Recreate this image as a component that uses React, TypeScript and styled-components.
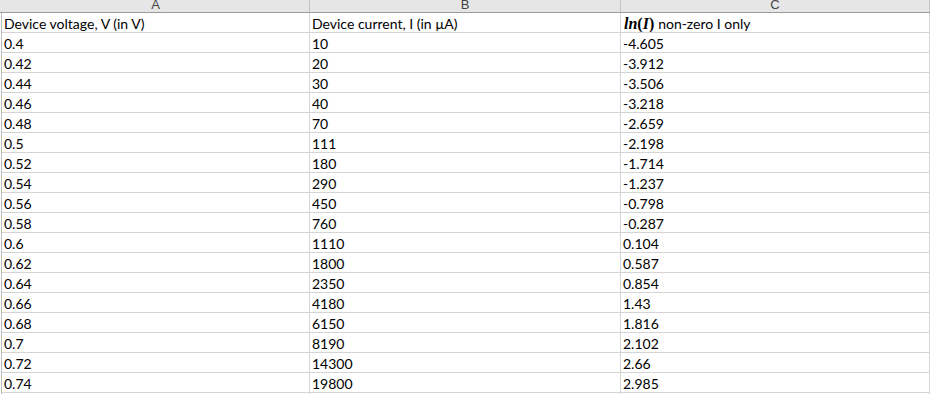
import styled, { createGlobalStyle } from 'styled-components';

const GlobalStyle = createGlobalStyle`
    html, body {
        margin: 0;
        padding: 0;
        background: #ffffff;
        overflow: hidden;
    }
`;

const Sheet = styled.div`
    width: 930px;
    height: 394px;
    overflow: hidden;
    background: #ffffff;
    font-family: Lato, "Liberation Sans", sans-serif;
    color: #000000;
`;

const Row = styled.div`
    display: grid;
    grid-template-columns: 2px 308px 311px 1fr;
`;

const HeaderRow = styled(Row)`
    height: 12px;
    background: #e6e6e6;
    border-bottom: 1px solid #9b9b9b;
`;

const Corner = styled.div`
    background: #e6e6e6;
`;

const ColumnHead = styled.div`
    height: 12px;
    overflow: hidden;
    display: flex;
    align-items: flex-end;
    justify-content: center;
    border-right: 1px solid #c4c4c4;
    font-family: "Liberation Sans", Arial, sans-serif;
    font-size: 13px;
    line-height: 14px;
    color: #444444;
`;

const Gutter = styled.div`
    border-right: 1px solid #bcbcbc;
`;

const Cell = styled.div`
    height: 19px;
    padding-left: 2px;
    display: flex;
    align-items: flex-end;
    border-right: 1px solid #d4d4d4;
    border-bottom: 1px solid #d4d4d4;
    font-size: 14px;
    line-height: 17px;
    white-space: nowrap;
    overflow: hidden;
`;

const MathLabel = styled.span`
    font-family: "Liberation Serif", "DejaVu Serif", serif;
    font-weight: bold;
    font-size: 16px;
    margin-left: 1px;
    margin-right: 4px;
`;

const data: [string, string, string][] = [
    ['0.4', '10', '-4.605'],
    ['0.42', '20', '-3.912'],
    ['0.44', '30', '-3.506'],
    ['0.46', '40', '-3.218'],
    ['0.48', '70', '-2.659'],
    ['0.5', '111', '-2.198'],
    ['0.52', '180', '-1.714'],
    ['0.54', '290', '-1.237'],
    ['0.56', '450', '-0.798'],
    ['0.58', '760', '-0.287'],
    ['0.6', '1110', '0.104'],
    ['0.62', '1800', '0.587'],
    ['0.64', '2350', '0.854'],
    ['0.66', '4180', '1.43'],
    ['0.68', '6150', '1.816'],
    ['0.7', '8190', '2.102'],
    ['0.72', '14300', '2.66'],
    ['0.74', '19800', '2.985'],
    ['', '', ''],
];

export default function App() {
    return (
        <Sheet>
            <GlobalStyle />
            <HeaderRow>
                <Corner />
                <ColumnHead>A</ColumnHead>
                <ColumnHead>B</ColumnHead>
                <ColumnHead>C</ColumnHead>
            </HeaderRow>
            <Row>
                <Gutter />
                <Cell>Device voltage, V (in V)</Cell>
                <Cell>Device current, I (in µA)</Cell>
                <Cell>
                    <MathLabel>
                        <i>ln</i>(<i>I</i>)
                    </MathLabel>
                    non-zero I only
                </Cell>
            </Row>
            {data.map(([v, i, ln], idx) => (
                <Row key={idx}>
                    <Gutter />
                    <Cell>{v}</Cell>
                    <Cell>{i}</Cell>
                    <Cell>{ln}</Cell>
                </Row>
            ))}
        </Sheet>
    );
}
